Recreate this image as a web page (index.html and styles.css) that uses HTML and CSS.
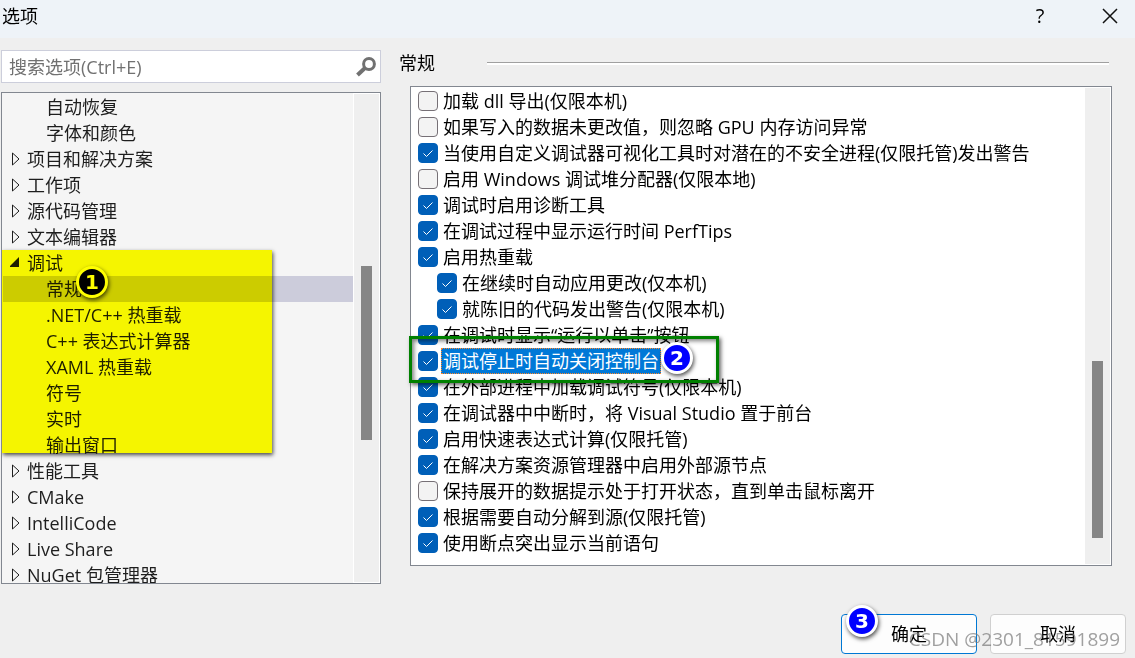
FILE: index.html
```html
<!DOCTYPE html>
<html lang="zh-CN">
<head>
<meta charset="utf-8">
<title>选项</title>
<link rel="stylesheet" href="styles.css">
</head>
<body>
<div class="dialog">
  <header class="titlebar">
    <h1 class="title">选项</h1>
    <button class="caption-button" type="button" aria-label="帮助">?</button>
    <button class="caption-button" type="button" aria-label="关闭">
      <svg width="16" height="16" viewBox="0 0 16 16"><path d="M1 1L15 15M15 1L1 15" stroke="#111" stroke-width="1.5" fill="none"/></svg>
    </button>
  </header>

  <main class="content">
    <section class="sidebar">
      <div class="search">
        <input class="search-input" type="text" placeholder="搜索选项(Ctrl+E)" aria-label="搜索选项">
        <svg class="search-icon" width="20" height="20" viewBox="0 0 20 20"><circle cx="13" cy="7" r="5.4" fill="none" stroke="#717171" stroke-width="3"/><path d="M9 11L1.500 18" stroke="#717171" stroke-width="4"/></svg>
      </div>
      <nav class="tree">
        <ul class="tree-items">
          <li class="node child">自动恢复</li>
          <li class="node child">字体和颜色</li>
          <li class="node closed">项目和解决方案</li>
          <li class="node closed">工作项</li>
          <li class="node closed">源代码管理</li>
          <li class="node closed">文本编辑器</li>
          <li class="group">
            <div class="node open">调试</div>
            <ul class="sublist">
              <li class="node child current">常规<span class="badge badge-one">1</span></li>
              <li class="node child">.NET/C++ 热重载</li>
              <li class="node child">C++ 表达式计算器</li>
              <li class="node child">XAML 热重载</li>
              <li class="node child">符号</li>
              <li class="node child">实时</li>
              <li class="node child">输出窗口</li>
            </ul>
            <div class="highlight"></div>
          </li>
          <li class="node closed">性能工具</li>
          <li class="node closed">CMake</li>
          <li class="node closed">IntelliCode</li>
          <li class="node closed">Live Share</li>
          <li class="node closed">NuGet 包管理器</li>
        </ul>
        <div class="scrollbar tree-scroll"><div class="thumb"></div></div>
      </nav>
    </section>

    <section class="panel">
      <h2 class="panel-title">常规</h2>
      <div class="options">
        <ul class="option-items">
          <li class="option"><input class="check" type="checkbox" id="o1"><label class="label" for="o1">加载 dll 导出(仅限本机)</label></li>
          <li class="option"><input class="check" type="checkbox" id="o2"><label class="label" for="o2">如果写入的数据未更改值，则忽略 GPU 内存访问异常</label></li>
          <li class="option"><input class="check" type="checkbox" id="o3" checked><label class="label" for="o3">当使用自定义调试器可视化工具时对潜在的不安全进程(仅限托管)发出警告</label></li>
          <li class="option"><input class="check" type="checkbox" id="o4"><label class="label" for="o4">启用 Windows 调试堆分配器(仅限本地)</label></li>
          <li class="option"><input class="check" type="checkbox" id="o5" checked><label class="label" for="o5">调试时启用诊断工具</label></li>
          <li class="option"><input class="check" type="checkbox" id="o6" checked><label class="label" for="o6">在调试过程中显示运行时间 PerfTips</label></li>
          <li class="option"><input class="check" type="checkbox" id="o7" checked><label class="label" for="o7">启用热重载</label></li>
          <li class="option nested"><input class="check" type="checkbox" id="o8" checked><label class="label" for="o8">在继续时自动应用更改(仅本机)</label></li>
          <li class="option nested"><input class="check" type="checkbox" id="o9" checked><label class="label" for="o9">就陈旧的代码发出警告(仅限本机)</label></li>
          <li class="option"><input class="check" type="checkbox" id="o10" checked><label class="label" for="o10">在调试时显示“运行以单击”按钮</label></li>
          <li class="option marked"><input class="check" type="checkbox" id="o11" checked><label class="label selected" for="o11">调试停止时自动关闭控制台</label><span class="frame"></span><span class="badge badge-two">2</span></li>
          <li class="option"><input class="check" type="checkbox" id="o12" checked><label class="label" for="o12">在外部进程中加载调试符号(仅限本机)</label></li>
          <li class="option"><input class="check" type="checkbox" id="o13" checked><label class="label" for="o13">在调试器中中断时，将 Visual Studio 置于前台</label></li>
          <li class="option"><input class="check" type="checkbox" id="o14" checked><label class="label" for="o14">启用快速表达式计算(仅限托管)</label></li>
          <li class="option"><input class="check" type="checkbox" id="o15" checked><label class="label" for="o15">在解决方案资源管理器中启用外部源节点</label></li>
          <li class="option"><input class="check" type="checkbox" id="o16"><label class="label" for="o16">保持展开的数据提示处于打开状态，直到单击鼠标离开</label></li>
          <li class="option"><input class="check" type="checkbox" id="o17" checked><label class="label" for="o17">根据需要自动分解到源(仅限托管)</label></li>
          <li class="option"><input class="check" type="checkbox" id="o18" checked><label class="label" for="o18">使用断点突出显示当前语句</label></li>
        </ul>
        <div class="scrollbar option-scroll"><div class="thumb"></div></div>
      </div>
    </section>
  </main>

  <footer class="actions">
    <button class="button primary" type="button">确定<span class="badge badge-three">3</span></button>
    <button class="button" type="button">取消</button>
    <span class="watermark">CSDN @2301_81591899</span>
  </footer>
</div>
</body>
</html>
```
FILE: styles.css
```css
* {
  box-sizing: border-box;
}

body {
  margin: 0;
  background: #efefef;
  color: #000;
  font: 18px/26px "Open Sans", "Noto Sans CJK SC", sans-serif;
}

ul {
  margin: 0;
  padding: 0;
  list-style: none;
}

button,
input {
  margin: 0;
  font: inherit;
  color: inherit;
}

.dialog {
  display: flex;
  flex-direction: column;
  height: 100vh;
  overflow: hidden;
}

.titlebar {
  display: flex;
  gap: 20px;
  height: 38px;
  padding: 0 0 6px 2px;
  align-items: center;
  background: #eef3f8;
}

.title {
  flex: 1;
  margin: 0;
  font-size: 18px;
  font-weight: 400;
}

.caption-button {
  display: flex;
  width: 50px;
  height: 32px;
  padding: 0;
  align-items: center;
  justify-content: center;
  border: 0;
  background: none;
  font-size: 20px;
}

.content {
  display: flex;
  flex: 1;
  min-height: 0;
  gap: 18px;
  padding: 12px 23px 0 1px;
}

.sidebar {
  display: flex;
  flex: 0 0 380px;
  flex-direction: column;
  gap: 9px;
}

.search {
  display: flex;
  height: 33px;
  padding: 0 4px 0 7px;
  align-items: center;
  border: 1px solid #cccedb;
  background: #fff;
}

.search-input {
  flex: 1;
  min-width: 0;
  padding: 0;
  border: 0;
  outline: 0;
  background: none;
}

.search-input::placeholder {
  color: #717171;
}

.tree {
  display: flex;
  flex: 1;
  min-height: 0;
  overflow: hidden;
  border: 1px solid #828790;
  background: #f5f5f5;
  color: #1e1e1e;
}

.tree-items {
  flex: 1;
  padding-top: 1px;
}

.node {
  display: flex;
  height: 26px;
  padding-left: 8px;
  align-items: center;
  white-space: pre;
}

.node.child {
  padding-left: 44px;
}

.closed::before,
.open::before {
  width: 17px;
  height: 16px;
  content: "";
  background: no-repeat 0 1px;
}

.closed::before {
  background-image: url("data:image/svg+xml,%3Csvg xmlns='http://www.w3.org/2000/svg' width='12' height='14'%3E%3Cpath d='M2.500 1L9 7L2.500 13Z' fill='none' stroke='%231e1e1e'/%3E%3C/svg%3E");
}

.open::before {
  background-image: url("data:image/svg+xml,%3Csvg xmlns='http://www.w3.org/2000/svg' width='12' height='14'%3E%3Cpath d='M9 1V11H-1Z' fill='%231e1e1e'/%3E%3C/svg%3E");
}

.group {
  position: relative;
}

.current {
  position: relative;
  margin-left: 1px;
  background: #ccccdb;
}

.node.current {
  padding-left: 43px;
}

.highlight {
  position: absolute;
  inset: 0 auto 5px 0;
  width: 270px;
  background: #ff0;
  box-shadow: 1px 2px 4px rgba(0, 0, 0, 0.7);
  mix-blend-mode: multiply;
}

.scrollbar {
  display: grid;
  width: 27px;
  justify-items: center;
  border: 1px solid #fff;
  background: #efefef;
}

.tree-scroll {
  grid-template-rows: 172fr 174fr 142fr;
}

.option-scroll {
  grid-template-rows: 273fr 177fr 26fr;
}

.thumb {
  grid-row: 2;
  width: 11px;
  background: #868686;
}

.panel {
  display: flex;
  flex: 1;
  min-width: 0;
  flex-direction: column;
  gap: 10px;
  padding-bottom: 18px;
}

.panel-title {
  display: flex;
  gap: 52px;
  margin: 0;
  padding-right: 3px;
  align-items: center;
  font-size: 18px;
  font-weight: 400;
}

.panel-title::after {
  flex: 1;
  height: 2px;
  border-top: 1px solid #a0a0a0;
  background: #fff;
  content: "";
}

.options {
  display: flex;
  flex: 1;
  min-height: 0;
  margin-left: 11px;
  border: 1px solid #828790;
  background: #fff;
}

.option-items {
  flex: 1;
  padding: 1px 0 0 7px;
}

.option {
  display: flex;
  gap: 3px;
  height: 26px;
  align-items: center;
  white-space: nowrap;
}

.nested {
  padding-left: 19px;
}

.check {
  width: 20px;
  height: 20px;
  border: 1px solid #767076;
  border-radius: 4px;
  appearance: none;
  background: #f3f3f3;
}

.check:checked {
  border-color: #005fb8;
  background: #005fb8 url("data:image/svg+xml,%3Csvg xmlns='http://www.w3.org/2000/svg' width='18' height='18'%3E%3Cpath d='M4.500 9.500L7.500 12.500L13.500 6.500' fill='none' stroke='white'/%3E%3C/svg%3E") center no-repeat;
}

.label {
  padding: 0 1px;
  border: 1px solid transparent;
  line-height: 24px;
}

.selected {
  border: 1px dotted #ff8728;
  background: #0078d7;
  color: #fff;
}

.marked {
  position: relative;
}

.frame {
  position: absolute;
  top: -12px;
  left: -9px;
  width: 310px;
  height: 47px;
  border: 3px solid #008000;
  box-shadow: 2px 2px 4px rgba(0, 0, 0, 0.6), inset 2px 2px 4px rgba(0, 0, 0, 0.5);
  pointer-events: none;
}

.badge {
  position: absolute;
  z-index: 1;
  width: 32px;
  height: 32px;
  border: 3px solid #fff;
  border-radius: 50%;
  background: #00f;
  box-shadow: 1px 2px 4px rgba(0, 0, 0, 0.7);
  color: #fff;
  font: bold 20px/26px "DejaVu Sans", sans-serif;
  text-align: center;
}

.badge-one {
  top: -10px;
  left: 73px;
  border-color: #ff0;
  background: #000;
  color: #ff0;
}

.badge-two {
  top: -6px;
  left: 243px;
}

.badge-three {
  top: -10px;
  left: 4px;
}

.actions {
  position: relative;
  display: flex;
  gap: 13px;
  justify-content: flex-end;
  padding: 30px 9px 4px;
}

.button {
  position: relative;
  width: 136px;
  height: 40px;
  padding: 0;
  border: 1px solid #d0d0d0;
  border-radius: 4px;
  background: #fdfdfd;
}

.primary {
  border-color: #0078d4;
}

.watermark {
  position: absolute;
  right: 15px;
  bottom: 6px;
  color: rgba(120, 120, 120, 0.7);
  font-size: 19px;
  pointer-events: none;
}
```
